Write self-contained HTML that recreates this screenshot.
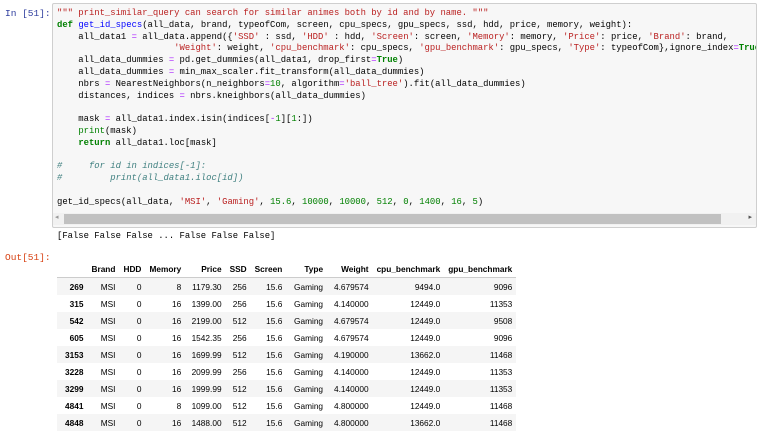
<!DOCTYPE html>
<html><head><meta charset="utf-8"><style>
body{margin:0;width:768px;height:442px;background:#fff;position:relative;overflow:hidden;font-family:"Liberation Sans",sans-serif}
.p{position:absolute;font-family:"Liberation Mono",monospace;font-size:9.5px;}
.in{color:#303f9f;left:5px;top:8px}
.out{color:#d84315;left:5px;top:252px}
.cell{position:absolute;left:52px;top:3px;width:703px;height:223px;background:#f7f7f7;border:1px solid #cfcfcf;border-radius:2px;overflow:hidden}
pre{margin:0;position:absolute;left:4px;top:4px;font-family:"Liberation Mono",monospace;font-size:8.9px;line-height:11.8px;color:#000;white-space:pre}
.k{color:#008000;font-weight:bold}.s{color:#ba2121}.n{color:#008000}.o{color:#aa22ff}.c{color:#408080;font-style:italic}.b{color:#008000}
.sb{position:absolute;left:0;top:209px;width:703px;height:12px;background:#f1f1f1}
.th{position:absolute;left:11px;top:1px;width:657px;height:10px;background:#c1c1c1}
.o1{position:absolute;left:57px;top:231px;font-family:"Liberation Mono",monospace;font-size:8.9px}
table{position:absolute;left:57px;top:261px;border-collapse:collapse;font-size:8.3px;color:#000}
td,th{padding:0 4px;height:17px;text-align:right;white-space:nowrap}
th{font-weight:bold}
thead th{border-bottom:1px solid #ccc;height:16px}
tbody tr:nth-child(odd){background:#f5f5f5}
tbody th{padding-left:8px}
</style></head><body>
<div class="p in">In [51]:</div>
<div class="cell"><pre><span class="s">""" print_similar_query can search for similar animes both by id and by name. """</span>
<span class="k">def</span> <span style="color:#0000ff">get_id_specs</span>(all_data, brand, typeofCom, screen, cpu_specs, gpu_specs, ssd, hdd, price, memory, weight):
    all_data1 <span class="o">=</span> all_data.append({<span class="s">'SSD'</span> : ssd, <span class="s">'HDD'</span> : hdd, <span class="s">'Screen'</span>: screen, <span class="s">'Memory'</span>: memory, <span class="s">'Price'</span>: price, <span class="s">'Brand'</span>: brand,
                      <span class="s">'Weight'</span>: weight, <span class="s">'cpu_benchmark'</span>: cpu_specs, <span class="s">'gpu_benchmark'</span>: gpu_specs, <span class="s">'Type'</span>: typeofCom},ignore_index<span class="o">=</span><span class="k">True</span>)
    all_data_dummies <span class="o">=</span> pd.get_dummies(all_data1, drop_first<span class="o">=</span><span class="k">True</span>)
    all_data_dummies <span class="o">=</span> min_max_scaler.fit_transform(all_data_dummies)
    nbrs <span class="o">=</span> NearestNeighbors(n_neighbors<span class="o">=</span><span class="n">10</span>, algorithm<span class="o">=</span><span class="s">'ball_tree'</span>).fit(all_data_dummies)
    distances, indices <span class="o">=</span> nbrs.kneighbors(all_data_dummies)

    mask <span class="o">=</span> all_data1.index.isin(indices[<span class="o">-</span><span class="n">1</span>][<span class="n">1</span>:])
    <span class="b">print</span>(mask)
    <span class="k">return</span> all_data1.loc[mask]

<span class="c">#     for id in indices[-1]:</span>
<span class="c">#         print(all_data1.iloc[id])</span>

get_id_specs(all_data, <span class="s">'MSI'</span>, <span class="s">'Gaming'</span>, <span class="n">15.6</span>, <span class="n">10000</span>, <span class="n">10000</span>, <span class="n">512</span>, <span class="n">0</span>, <span class="n">1400</span>, <span class="n">16</span>, <span class="n">5</span>)</pre>
<div class="sb"><div class="th"></div><span style="position:absolute;left:2px;top:0;font-size:7px;color:#999">◂</span><span style="position:absolute;right:4px;top:0;font-size:7px;color:#555">▸</span></div>
</div>
<div class="o1">[False False False ... False False False]</div>
<div class="p out">Out[51]:</div>
<table>
<thead><tr><th></th><th>Brand</th><th>HDD</th><th>Memory</th><th style="padding-left:16px">Price</th><th>SSD</th><th>Screen</th><th style="padding-left:18px">Type</th><th style="padding-left:14px">Weight</th><th>cpu_benchmark</th><th>gpu_benchmark</th></tr></thead>
<tbody>
<tr><th>269</th><td>MSI</td><td>0</td><td>8</td><td>1179.30</td><td>256</td><td>15.6</td><td>Gaming</td><td>4.679574</td><td>9494.0</td><td>9096</td></tr>
<tr><th>315</th><td>MSI</td><td>0</td><td>16</td><td>1399.00</td><td>256</td><td>15.6</td><td>Gaming</td><td>4.140000</td><td>12449.0</td><td>11353</td></tr>
<tr><th>542</th><td>MSI</td><td>0</td><td>16</td><td>2199.00</td><td>512</td><td>15.6</td><td>Gaming</td><td>4.679574</td><td>12449.0</td><td>9508</td></tr>
<tr><th>605</th><td>MSI</td><td>0</td><td>16</td><td>1542.35</td><td>256</td><td>15.6</td><td>Gaming</td><td>4.679574</td><td>12449.0</td><td>9096</td></tr>
<tr><th>3153</th><td>MSI</td><td>0</td><td>16</td><td>1699.99</td><td>512</td><td>15.6</td><td>Gaming</td><td>4.190000</td><td>13662.0</td><td>11468</td></tr>
<tr><th>3228</th><td>MSI</td><td>0</td><td>16</td><td>2099.99</td><td>256</td><td>15.6</td><td>Gaming</td><td>4.140000</td><td>12449.0</td><td>11353</td></tr>
<tr><th>3299</th><td>MSI</td><td>0</td><td>16</td><td>1999.99</td><td>512</td><td>15.6</td><td>Gaming</td><td>4.140000</td><td>12449.0</td><td>11353</td></tr>
<tr><th>4841</th><td>MSI</td><td>0</td><td>8</td><td>1099.00</td><td>512</td><td>15.6</td><td>Gaming</td><td>4.800000</td><td>12449.0</td><td>11468</td></tr>
<tr><th>4848</th><td>MSI</td><td>0</td><td>16</td><td>1488.00</td><td>512</td><td>15.6</td><td>Gaming</td><td>4.800000</td><td>13662.0</td><td>11468</td></tr>
</tbody></table>
</body></html>
